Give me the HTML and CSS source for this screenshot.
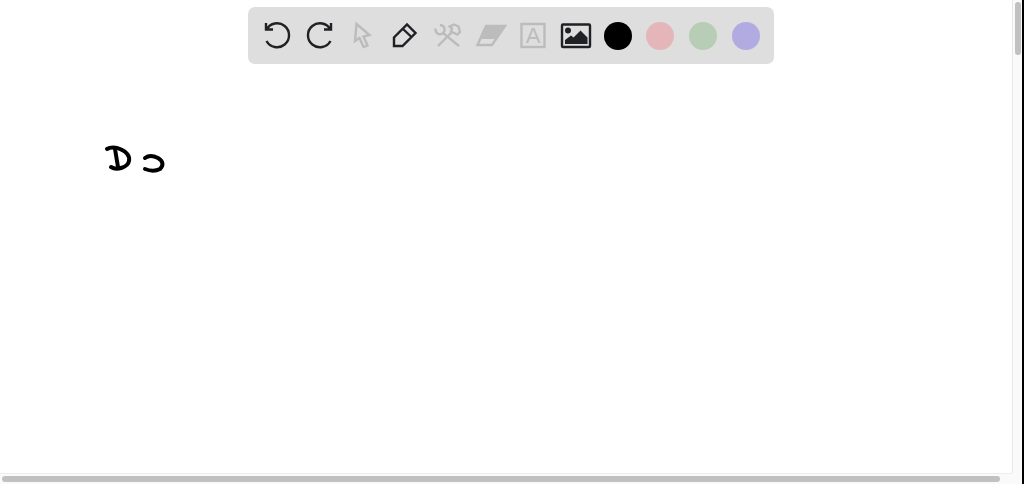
FILE: index.html
```html
<!DOCTYPE html>
<html lang="en">
<head>
    <meta charset="utf-8">
    <meta name="viewport" content="width=device-width, initial-scale=1.0">
    <title>Whiteboard</title>
    <link rel="stylesheet" href="styles.css">
</head>

<body>

    <!-- drawing area and its scrollbars -->
    <main class="workspace">
        <svg class="board" role="img" aria-label="Drawing">
            <path d="M107 149 C110 147 116 147 120 149 C127 152 130 156 129 161 C128 167 117 171 111 167" />
            <path d="M115 149 L118 167" />
            <path d="M145 158 C149 155 154 156 158 158 C163 161 164 165 160 169 C156 171 150 171 145 169" />
        </svg>
        <div class="track track-y"><div class="thumb"></div></div>
        <div class="track track-x"><div class="thumb"></div></div>
    </main>

    <!-- floating toolbar -->
    <div class="toolbar-area">
        <div class="toolbar" role="toolbar" aria-label="Drawing tools">

            <button type="button" aria-label="Undo">
                <svg viewBox="0 0 32 32"><path d="M6 3 V9.500 H13 M6.500 9.500 A12 12 0 1 1 6.500 21" /></svg>
            </button>

            <button type="button" aria-label="Redo">
                <svg viewBox="0 0 32 32"><path d="M28 3 V9.500 H21 M27.500 9.500 A12 12 0 1 0 27.500 21" /></svg>
            </button>

            <button type="button" class="dim" aria-label="Select">
                <svg viewBox="0 0 32 32"><path d="M11.500 4 L24.500 15 L18.500 16.500 L22.500 25.500 L18.500 27 L14.500 18 L10 21 Z" /></svg>
            </button>

            <button type="button" aria-label="Pen">
                <svg viewBox="0 0 32 32"><path d="M6 26 V17.500 L19 4.500 L27.500 13 L14.500 26 Z M14.500 8.500 L23.500 17" /></svg>
            </button>

            <button type="button" class="dim" aria-label="Tools">
                <svg viewBox="0 0 32 32">
                    <path d="M4.500 8.500 C4 13 8 15.500 11.500 13.500 C15 10.500 14 5.500 9 5 M12 13 L28 26" />
                    <path d="M7 26 L21 12 M18.500 6.500 L23 4.500 L27.500 6.500 L29 12 L26.500 14.500 L20 11.500 L21 8.500 Z" />
                </svg>
            </button>

            <button type="button" class="dim" aria-label="Eraser">
                <svg viewBox="0 0 32 32">
                    <path d="M12 6 H31 L18 25 H3.500 Z" />
                    <path class="solid" d="M12 6 H31 L22 19 H6 L8 12 Z" />
                </svg>
            </button>

            <button type="button" class="dim" aria-label="Text">
                <svg viewBox="0 0 32 32">
                    <rect x="5.500" y="4" width="23" height="23" />
                    <text x="17" y="23">A</text>
                </svg>
            </button>

            <button type="button" aria-label="Image">
                <svg viewBox="0 0 32 32">
                    <rect x="3" y="4.500" width="28" height="22.500" rx="1" />
                    <circle class="solid" cx="9" cy="10.500" r="3" />
                    <path class="solid" d="M6 24 V20 L12 15.500 L14.500 17.500 L21.500 10.500 L28.500 17.500 V24 Z" />
                </svg>
            </button>

            <input type="radio" name="color" class="black" aria-label="Black" checked>
            <input type="radio" name="color" class="red" aria-label="Red">
            <input type="radio" name="color" class="green" aria-label="Green">
            <input type="radio" name="color" class="purple" aria-label="Purple">
        </div>
    </div>

</body>
</html>
```
FILE: styles.css
```css
* {
    box-sizing: border-box;
}

body {
    margin: 0;
    background: #fff;
    font-family: "Liberation Sans", sans-serif;
}

/* drawing area */
.workspace {
    display: grid;
    grid-template-columns: 1fr 10px;
    grid-template-rows: 1fr 11px;
    height: 100vh;
    border-right: 2px solid #000;
    background: #fafafa;
}

.board {
    width: 100%;
    height: 100%;
    background: #fff;
    fill: none;
    stroke: #000;
    stroke-width: 4;
    stroke-linecap: round;
    stroke-linejoin: round;
}

/* scrollbars */
.track {
    padding: 2px;
}

.track-y {
    border-left: 1px solid #e8e8e8;
}

.track-x {
    border-top: 1px solid #ededed;
}

.thumb {
    border-radius: 3px;
    background: #c1c1c1;
}

.track-y .thumb {
    width: 6px;
    height: 11vh;
}

.track-x .thumb {
    width: 99%;
    height: 6px;
}

/* toolbar */
.toolbar-area {
    position: absolute;
    top: 7px;
    left: 0;
    right: 2px;
    display: flex;
    justify-content: center;
}

.toolbar {
    display: flex;
    justify-content: space-between;
    align-items: center;
    width: 526px;
    max-width: 100%;
    min-height: 57px;
    padding: 12px;
    border-radius: 7px;
    background: #dedede;
}

.toolbar button {
    width: 32px;
    height: 32px;
    padding: 0;
    border: none;
    background: none;
    color: #202124;
}

.toolbar button.dim {
    color: #bcbcbc;
}

.toolbar svg {
    display: block;
    overflow: visible;
    fill: none;
    stroke: currentColor;
    stroke-width: 2.4;
}

.toolbar .solid {
    fill: currentColor;
    stroke: none;
}

.toolbar text {
    fill: currentColor;
    stroke: none;
    font-size: 22px;
    text-anchor: middle;
}

/* color swatches */
.toolbar input {
    appearance: none;
    width: 28px;
    height: 28px;
    margin: 0 2px;
    border-radius: 50%;
}

.black  { background: #000; }
.red    { background: #e4b5b9; }
.green  { background: #b8cdb5; }
.purple { background: #b1abe1; }
```
